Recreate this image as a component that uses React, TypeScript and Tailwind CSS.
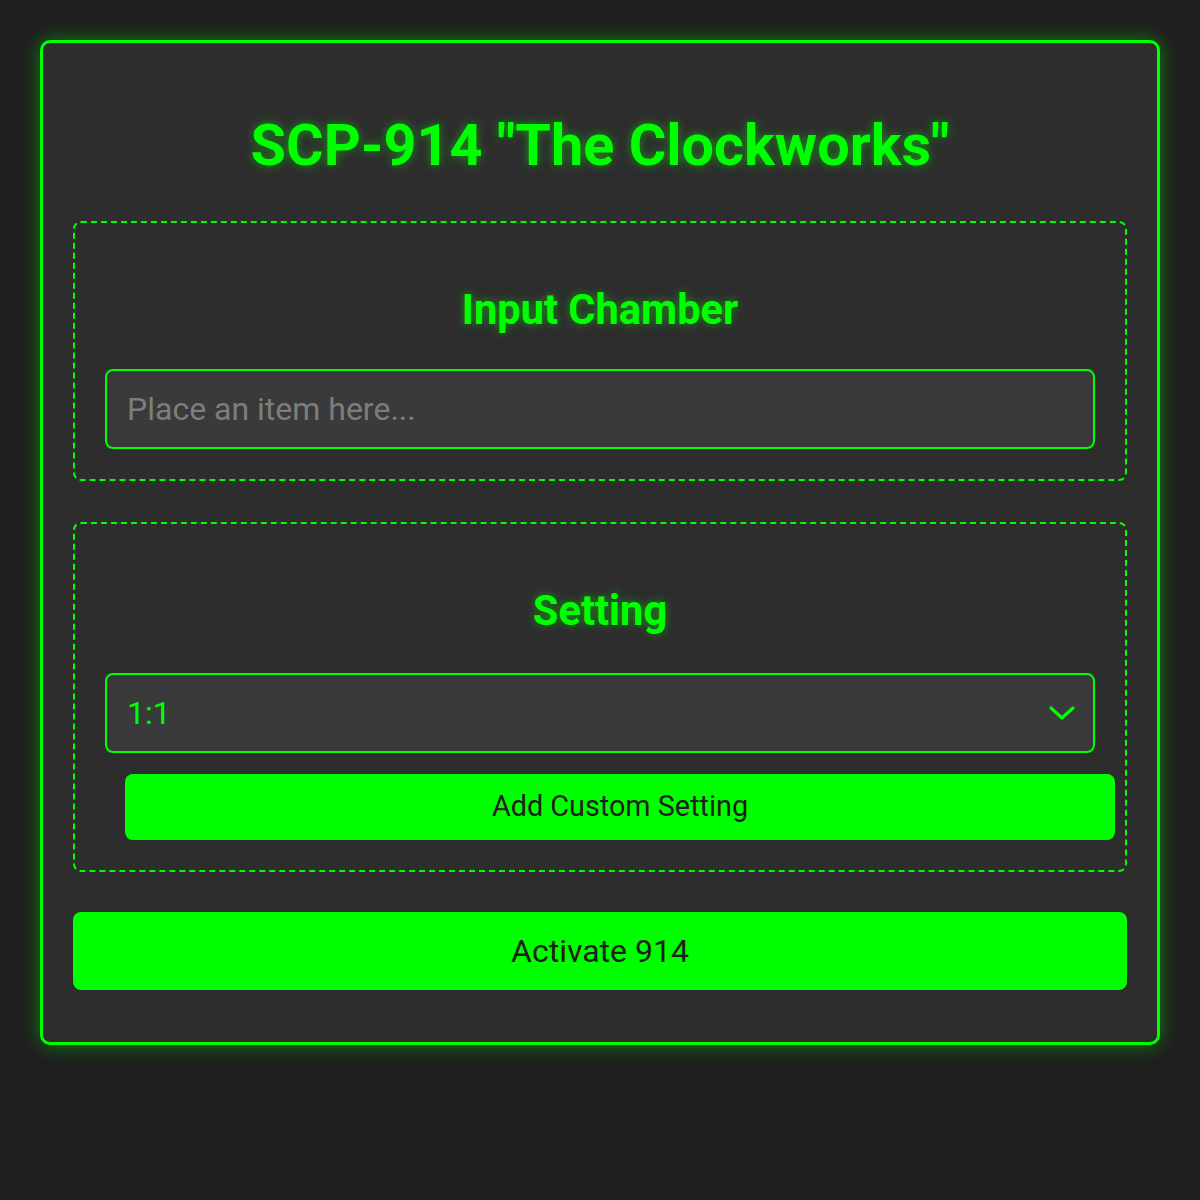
import React, { useState } from 'react'

const SETTINGS = ['Rough', 'Coarse', '1:1', 'Fine', 'Very Fine']

function Chevron() {
  return (
    <svg width="28" height="16" viewBox="0 0 28 16" fill="none" stroke="#00ff00" strokeWidth="3.2" strokeLinecap="round" strokeLinejoin="round">
      <path d="M3 3l11 10 11-10" />
    </svg>
  )
}

export default function App() {
  const [item, setItem] = useState('')
  const [setting, setSetting] = useState('1:1')

  return (
    <div className="min-h-[1200px] bg-[#1e1e1e] p-10 font-['Roboto',sans-serif]">
      <div className="rounded-[10px] border-[3px] border-[#00ff00] bg-[#2d2d2d] px-[30px] pt-[30px] pb-[52px] shadow-[0_0_20px_rgba(0,255,0,0.45)]">
        <h1 className="mt-[39px] mb-[41px] text-center text-[57.6px] leading-[68px] font-bold text-[#00ff00] [text-shadow:0_0_10px_rgba(0,255,0,0.5)]">
          SCP-914 "The Clockworks"
        </h1>

        {/* Input chamber */}
        <div className="rounded-[8px] border-2 border-dashed border-[#00ff00] p-[30px]">
          <h2 className="mt-[32px] mb-[34px] text-center text-[41.6px] leading-[50px] font-bold text-[#00ff00] [text-shadow:0_0_8px_rgba(0,255,0,0.5)]">
            Input Chamber
          </h2>
          <input
            type="text"
            value={item}
            onChange={(e) => setItem(e.target.value)}
            placeholder="Place an item here..."
            className="block h-[80px] w-full rounded-[8px] border-2 border-[#00ff00] bg-[#3a3a3a] px-[20px] text-[32px] text-[#00ff00] outline-none placeholder:text-[#7d7d7d]"
          />
        </div>

        {/* Setting */}
        <div className="mt-[41px] rounded-[8px] border-2 border-dashed border-[#00ff00] p-[30px]">
          <h2 className="mt-[32px] mb-[37px] text-center text-[41.6px] leading-[50px] font-bold text-[#00ff00] [text-shadow:0_0_8px_rgba(0,255,0,0.5)]">
            Setting
          </h2>
          <div className="relative">
            <select
              value={setting}
              onChange={(e) => setSetting(e.target.value)}
              className="block h-[80px] w-full appearance-none rounded-[8px] border-2 border-[#00ff00] bg-[#3a3a3a] px-[20px] text-[32px] text-[#00ff00] outline-none"
            >
              {SETTINGS.map((s) => (
                <option key={s} value={s}>{s}</option>
              ))}
            </select>
            <span className="pointer-events-none absolute right-[19px] top-1/2 flex -translate-y-1/2">
              <Chevron />
            </span>
          </div>
          <button className="mt-[21px] ml-[20px] block h-[66px] w-full rounded-[8px] bg-[#00ff00] text-[28.8px] text-[#1e1e1e]">
            Add Custom Setting
          </button>
        </div>

        <button className="mt-[40px] block h-[78px] w-full rounded-[8px] bg-[#00ff00] text-[32px] text-[#1e1e1e]">
          Activate 914
        </button>
      </div>
    </div>
  )
}
